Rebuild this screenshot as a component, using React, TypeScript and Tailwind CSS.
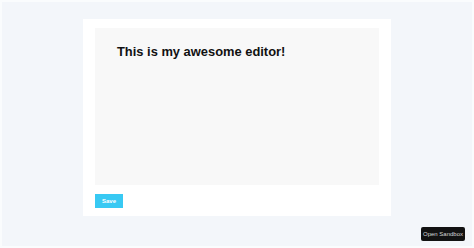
import React from "react";

export default function App() {
  return (
    <div
      className="relative h-[248px] w-[474px] overflow-hidden border-2 border-[#fafcfd] bg-[#f3f6fa] flex flex-col items-center pt-[17px]"
      style={{ fontFamily: '"Liberation Sans", Arial, sans-serif' }}
    >
      <div className="w-[308px] h-[197px] bg-white px-[12px] pt-[9px] flex flex-col">
        <div className="w-[284px] h-[157px] bg-[#f8f8f8] pl-[22px] pt-[16px]">
          <h1 className="text-[12.9px] leading-[1.2] font-bold text-[#111]">
            This is my awesome editor!
          </h1>
        </div>
        <button className="mt-[9px] w-[28px] h-[14px] bg-[#38c9f3] text-white text-[6px] font-bold flex items-center justify-center">
          Save
        </button>
      </div>
      <button className="absolute right-[7px] bottom-[5px] w-[44px] h-[14px] rounded-[2px] bg-[#121212] text-[#d8d8d8] text-[6px] flex items-center justify-center whitespace-nowrap">
        Open Sandbox
      </button>
    </div>
  );
}
